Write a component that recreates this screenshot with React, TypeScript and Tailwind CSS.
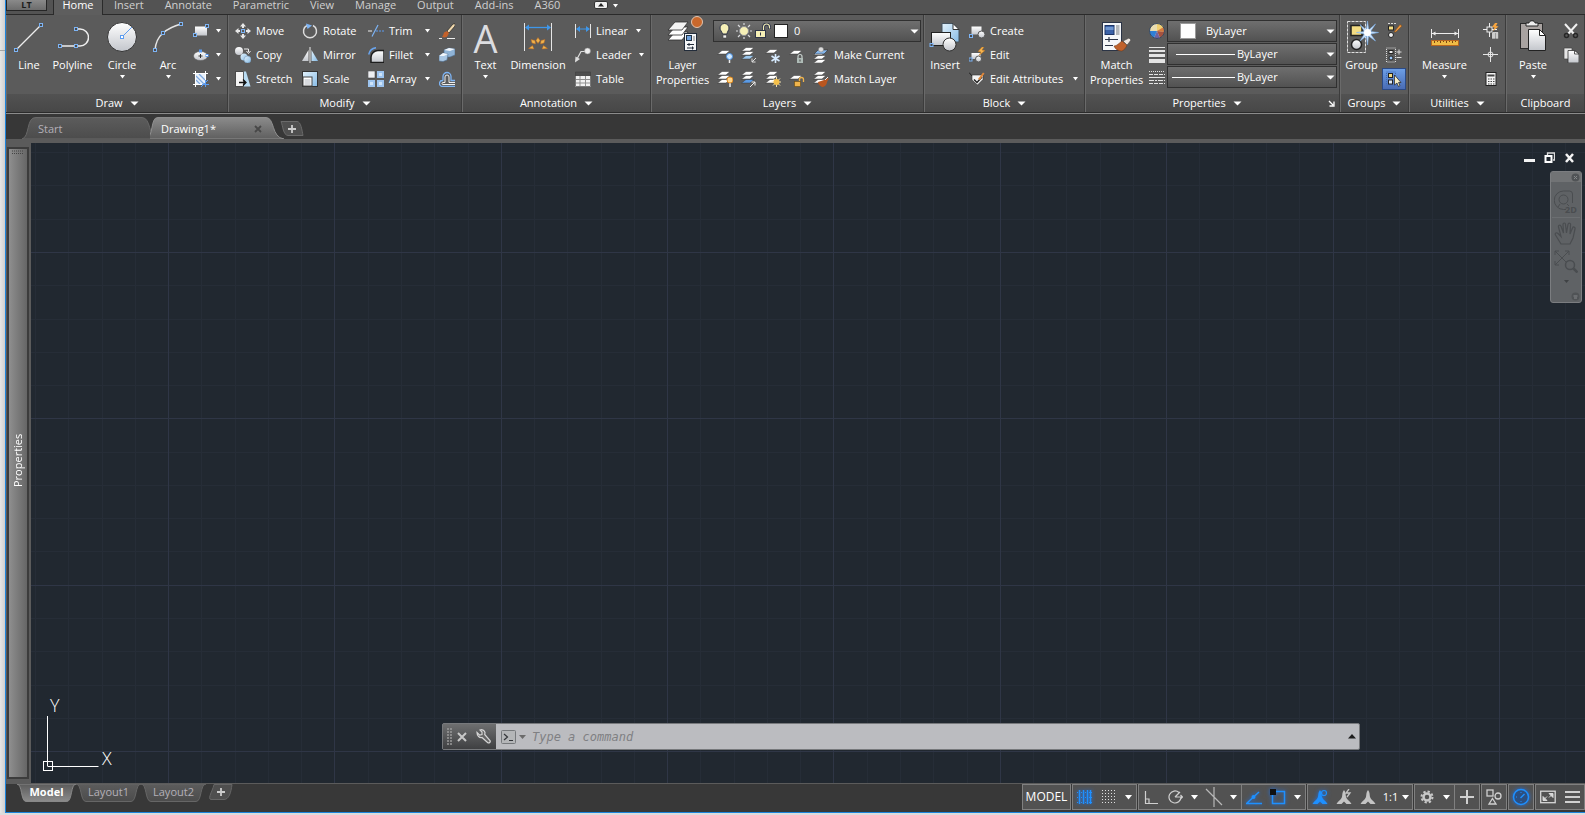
import type { ReactNode } from 'react'

const BLUE = '#7db4f5'
const SNAP = '#1e90ff'

function Svg({ w = 16, h = 16, children, className = '' }: { w?: number; h?: number; children: ReactNode; className?: string }) {
  return (
    <svg width={w} height={h} viewBox={`0 0 ${w} ${h}`} fill="none" aria-hidden="true" className={`shrink-0 ${className}`}>
      {children}
    </svg>
  )
}

function Caret() {
  return (
    <Svg w={7} h={4}>
      <path d="M1 0h5L3.500 3.500z" fill="#fff" />
    </Svg>
  )
}

function BigCaret() {
  return (
    <Svg w={9} h={5}>
      <path d="M0.500 0.500h8L4.500 4.500z" fill="#fff" />
    </Svg>
  )
}

function Grip({ x, y }: { x: number; y: number }) {
  return <rect x={x - 1.5} y={y - 1.5} width="3" height="3" fill="#4a4a4a" stroke={BLUE} />
}

function SharedDefs() {
  return (
    <svg className="absolute h-0 w-0" aria-hidden="true">
      <defs>
        <linearGradient id="silver" x1="0" y1="0" x2="0" y2="1">
          <stop offset="0" stopColor="#ffffff" />
          <stop offset="1" stopColor="#c3c6cc" />
        </linearGradient>
        <linearGradient id="sky" x1="0" y1="0" x2="1" y2="1">
          <stop offset="0" stopColor="#e4f2fb" />
          <stop offset="1" stopColor="#86bbe6" />
        </linearGradient>
        <linearGradient id="tab" x1="0" y1="0" x2="0" y2="1">
          <stop offset="0" stopColor="#5c5c5c" />
          <stop offset="1" stopColor="#4c4c4c" />
        </linearGradient>
        <linearGradient id="tabOn" x1="0" y1="0" x2="0" y2="1">
          <stop offset="0" stopColor="#8b8b8b" />
          <stop offset="1" stopColor="#5f5f5f" />
        </linearGradient>
        <linearGradient id="layoutOn" x1="0" y1="0" x2="0" y2="1">
          <stop offset="0" stopColor="#5b5b5b" />
          <stop offset="1" stopColor="#8c8c8c" />
        </linearGradient>
      </defs>
    </svg>
  )
}

/* stack of tilted sheets, shared by the layer icons */
function Sheets({ y = 0, n = 3, last = '#fff' }: { y?: number; n?: number; last?: string }) {
  return (
    <g transform={`translate(0 ${y})`}>
      {Array.from({ length: n }, (_, i) => n - 1 - i).map((i) => (
        <path key={i} d={`M5 ${0.5 + i * 4}h8l-4 3.500H0.500z`} fill={i === n - 1 ? last : '#fff'} stroke="#3a3a3a" strokeWidth=".5" />
      ))}
    </g>
  )
}

const icons = {
  line: (
    <Svg w={32} h={36}>
      <path d="M3 30 28 5" stroke="#eee" strokeWidth="1.3" />
      <Grip x={3} y={30} />
      <Grip x={28} y={5} />
    </Svg>
  ),
  polyline: (
    <Svg w={32} h={36}>
      <path d="M3 26h20a8.500 8.500 0 0 0 0-17h-4" stroke="#eee" strokeWidth="1.5" />
      <Grip x={3} y={26} />
      <Grip x={19} y={26} />
      <Grip x={19} y={9} />
    </Svg>
  ),
  circle: (
    <Svg w={32} h={36}>
      <circle cx="16" cy="17" r="14.5" fill="url(#silver)" stroke="#333" />
      <path d="M16 17 26 7" stroke="#5c9cf0" />
      <rect x="14.500" y="15.500" width="3" height="3" fill="#fff" stroke="#5c9cf0" />
    </Svg>
  ),
  arc: (
    <Svg w={32} h={36}>
      <path d="M3 30Q4 19 11 13T29 4" stroke="#e4e4e4" strokeWidth="1.5" />
      <Grip x={3} y={30} />
      <Grip x={11} y={13} />
      <Grip x={29} y={4} />
    </Svg>
  ),
  rect: (
    <Svg>
      <rect x="2" y="3.500" width="12" height="9" fill="url(#silver)" />
      <Grip x={2} y={12} />
      <Grip x={14} y={3} />
    </Svg>
  ),
  ellipse: (
    <Svg>
      <ellipse cx="7.500" cy="9" rx="7" ry="4.500" fill="url(#silver)" stroke="#555" strokeWidth=".5" />
      <path d="M7.500 7v4M5.500 9h4" stroke="#333" />
      <rect x="6.500" y="3" width="2" height="2" fill="#fff" stroke="#5c9cf0" />
      <rect x="13" y="7.500" width="2" height="2" fill="#fff" stroke="#5c9cf0" />
    </Svg>
  ),
  hatch: (
    <Svg>
      <rect x="3" y="3" width="9" height="10" fill="#e8f1fb" />
      <path d="m3 9 4 4M3 5l8 8M6 3l6 6" stroke="#7ea9e0" strokeWidth="1.200" />
      <path d="M0 2.500h15M2.500 0v16M0 13.500h13M12.500 0v10" stroke="#fff" />
      <path d="m8 16 7-7M9 13.500h7M12.500 9v7" stroke="#5c9cf0" />
    </Svg>
  ),
  move: (
    <Svg>
      <path d="m8 0 3 3.500H5zM8 16l3-3.500H5zM0 8l3.500-3v6zM16 8l-3.500-3v6z" fill="#e8e8e8" />
      <path d="M8 3v2M8 11v2M3 8h2M11 8h2" stroke="#e8e8e8" strokeWidth="2" />
      <rect x="6.500" y="6.500" width="3" height="3" stroke={BLUE} />
    </Svg>
  ),
  copy: (
    <Svg>
      <circle cx="4" cy="4" r="4" fill="url(#silver)" />
      <circle cx="9" cy="10" r="3.500" fill="url(#sky)" />
      <circle cx="12.500" cy="12.500" r="3.500" fill="url(#sky)" stroke="#6c93b8" strokeWidth=".5" />
      <path d="M9 2h4.500v3M11.500 4l2 2.500 2-2.500" stroke="#eee" />
    </Svg>
  ),
  stretch: (
    <Svg>
      <path d="M8 .5h3l4.500 15H8z" fill="#b9dcf3" />
      <path d="M.5.500h8v15h-8z" fill="#f4f4f4" stroke="#222" strokeWidth=".7" />
      <path d="M4 11.500h6M8 8.500l3 3-3 3" stroke="#111" strokeWidth="1.300" />
    </Svg>
  ),
  rotate: (
    <Svg>
      <path d="M11 2.500a6.500 6.500 0 1 1-6 0" stroke="#ddd" strokeWidth="1.500" />
      <path d="M4 .5 10 2.500 5.500 6z" fill={BLUE} />
    </Svg>
  ),
  mirror: (
    <Svg>
      <path d="M6.500 3v11H0z" fill="url(#silver)" />
      <path d="M9.500 3v11H16z" fill="url(#sky)" />
      <path d="M8 0v16" stroke="#eee" />
    </Svg>
  ),
  scale: (
    <Svg>
      <rect x=".5" y=".5" width="15" height="15" fill="url(#sky)" stroke="#333" />
      <rect x="1" y="6" width="9" height="9" fill="#fff" stroke="#444" />
      <rect x="2.500" y="8" width="6" height="6" fill="#d8dade" />
    </Svg>
  ),
  trim: (
    <Svg>
      <path d="M0 8h4" stroke="#eee" />
      <path d="M4 13.500 10 2" stroke={BLUE} strokeWidth="1.200" />
      <path d="M8 8h8" stroke="#5c9cf0" strokeDasharray="2 1" />
    </Svg>
  ),
  fillet: (
    <Svg>
      <path d="M3 15.500V10a7 7 0 0 1 7-6.500h6v12z" fill="url(#silver)" stroke="#1d1d1d" strokeWidth="1.500" />
      <path d="M.7 7.500A8.500 8.500 0 0 1 8 .7" stroke="#6aa5ee" strokeWidth="1.500" />
    </Svg>
  ),
  array: (
    <Svg>
      <path d="M0 0h7v7H0z" fill="#eef0f3" stroke="#333" strokeWidth=".5" />
      <path d="M9 0h7v7H9zM0 9h7v7H0zM9 9h7v7H9z" fill="#9dc4ef" />
      <path d="M11 2h3v3h-3zM2 11h3v3H2zM11 11h3v3h-3z" fill="#cfe4f9" />
    </Svg>
  ),
  erase: (
    <Svg>
      <path d="M8 8 14 1l2-.5V3L10 10z" fill="#f1d9ae" stroke="#222" strokeWidth=".7" />
      <path d="M5 9.500 8 8l2 2-1.500 3c-1.500 2-4 1.500-5.500.5 1 0 1.500-2.500 2-4z" fill="#c4612a" />
      <path d="M0 15.500h3M8 15.500h8" stroke="#eee" />
    </Svg>
  ),
  explode: (
    <Svg>
      <path d="m5 3 5-2 6 1v6l-5 2H5z" fill="#8fb3d6" stroke="#4f6f90" strokeWidth=".6" />
      <path d="m0 9 4-3 5 1-1 6-4 1.500L0 14z" fill="#a9c7e4" stroke="#4f6f90" strokeWidth=".6" />
      <path d="m5 3 5-2 6 1-5 2zM0 9l4-3 5 1-4 2z" fill="#f1f6fb" />
    </Svg>
  ),
  offset: (
    <Svg>
      <path d="M4 9.500V5.500a4 4 0 0 1 8 0v4h4M16 15.500H3.500a3 3 0 0 1 0-6H4" stroke={BLUE} strokeWidth="1.300" />
      <path d="M6 11.500V6a2 2 0 0 1 4 0v5.500h6M6 11.500H4a1 1 0 0 0 0 2h12" stroke="#eee" />
    </Svg>
  ),
  text: <span className="text-[38px] leading-9 text-[#dcdde0]">A</span>,
  dimension: (
    <Svg w={32} h={36}>
      <path d="M2.500 3v28M29.500 3v28" stroke="#e6e6e6" />
      <path d="M4 7.500h23" stroke="#3f97ea" strokeWidth="1.300" />
      <path d="m3 7.500 4-3v6zM29 7.500l-4-3v6z" fill="#3f97ea" />
      <g fill="#f0b44c" stroke="#b8651f" strokeWidth=".5">
        <path d="m16 17.500 2 3-2 3-2-3z" />
        <path d="m9 19.500 4 1 .5 3.500-3.500-1z" />
        <path d="m23 19.500-4 1-.5 3.500 3.500-1z" />
        <path d="m6.500 28.500 4-3 1.500 3.500z" />
        <path d="m25.500 28.500-4-3-1.500 3.500z" />
      </g>
    </Svg>
  ),
  linear: (
    <Svg>
      <path d="M.5 1v14M15.500 1v14" stroke="#e6e6e6" />
      <path d="M2 6h12" stroke="#3f97ea" />
      <path d="m1 6 4-3v6zM15 6l-4-3v6z" fill="#3f97ea" />
    </Svg>
  ),
  leader: (
    <Svg>
      <path d="M10 4.500H6L2 12" stroke="#ddd" strokeWidth="1.200" />
      <path d="m0 15.500.5-6L5 12z" fill="#ddd" />
      <circle cx="12.500" cy="4" r="3" fill="#eee" stroke="#888" strokeWidth=".5" />
    </Svg>
  ),
  table: (
    <Svg>
      <rect y="1" width="16" height="15" fill="#f1f1f1" />
      <rect y="1" width="16" height="4" fill="#4e4e4e" />
      <path d="M1 8.500h14M1 12h14M5 5v10M10.500 5v10" stroke="#8f8f8f" />
      <path d="M.5 1h15v14.500H.5z" stroke="#444" strokeWidth=".7" />
    </Svg>
  ),
  layerProps: (
    <Svg w={36} h={36} className="overflow-visible">
      <g stroke="#2f2f2f" strokeWidth=".8">
        <path d="M10 12h13l-6 8H3z" fill="#fff" />
        <path d="M10 7h13l-6 8H3z" fill="#fff" />
        <path d="M10 2h13l-6 8H3z" fill="#f3f3f3" />
      </g>
      <rect x="19.500" y="13.500" width="12" height="17" fill="#f4f6f8" stroke="#222c3a" />
      <rect x="21.500" y="15.500" width="5" height="5" fill="#6fa3e0" stroke="#234" />
      <path d="M28 16h2v5h-2z" fill="#bbb" />
      <path d="M22 24.500h7M22 28h7M24 23v3M27.500 26.500v3" stroke="#222c3a" />
      <circle cx="32" cy="2" r="5.500" fill="#c9682c" stroke="#e0c4b0" />
    </Svg>
  ),
  layOff: (
    <Svg>
      <Sheets n={1} y={3} />
      <path d="M12.500 11v5" stroke="#eee" strokeWidth="1.500" />
      <circle cx="12.500" cy="9.500" r="3" fill="#cfe8ff" stroke="#4a90e2" />
    </Svg>
  ),
  layIso: (
    <Svg>
      <Sheets last="#9cc8ee" />
      <path d="m15 11-4 4M11 11.500V15h3.500" stroke="#ddd" />
    </Svg>
  ),
  layFreeze: (
    <Svg>
      <Sheets n={1} y={2} />
      <path d="M10.500 7v9M6.500 9l8 5M14.500 9l-8 5" stroke="#d7ebff" strokeWidth="1.600" />
    </Svg>
  ),
  layLock: (
    <Svg>
      <Sheets n={1} y={3} />
      <rect x="8" y="11" width="6" height="5" fill="#aebbb6" />
      <path d="M9 11V9.500a2 2 0 0 1 4 0V11" stroke="#c9d3cf" strokeWidth="1.200" />
      <path d="M11 12.500v2" stroke="#444" />
    </Svg>
  ),
  makeCurrent: (
    <Svg>
      <Sheets y={4} />
      <path d="M5 3h10l-4 4H1z" fill="#86b6ea" stroke="#333" strokeWidth=".6" />
      <circle cx="8" cy="2.500" r="2.500" fill="#ddd" stroke="#777" strokeWidth=".5" />
    </Svg>
  ),
  layOn: (
    <Svg>
      <Sheets />
      <path d="M13 11v5" stroke="#eee" strokeWidth="1.500" />
      <circle cx="13" cy="9" r="3" fill="#ffd58a" stroke="#e08a20" />
    </Svg>
  ),
  layUniso: (
    <Svg>
      <Sheets last="#5b9be6" />
      <path d="m9 16 5-5M10.500 11H14v3.500" stroke="#eee" />
    </Svg>
  ),
  layThaw: (
    <Svg>
      <Sheets />
      <path d="M11.500 6v10M6.500 11h10M8 7.500l7 7M15 7.500l-7 7" stroke="#f3e3b0" />
      <circle cx="11.500" cy="11" r="3" fill="#f5c04a" />
    </Svg>
  ),
  layUnlock: (
    <Svg>
      <Sheets n={1} y={4} />
      <rect x="5.500" y="10.500" width="6" height="5" fill="#f0b44c" stroke="#6a4a10" strokeWidth=".6" />
      <path d="M10.500 10V8.500a2 2 0 0 1 4 0V11" stroke="#f0b44c" strokeWidth="1.300" />
    </Svg>
  ),
  matchLayer: (
    <Svg>
      <Sheets />
      <path d="m5 11 6-2 5-2-2 4c0 3-3 5-5 5-2-1-4-3-4-5z" fill="#b9561f" />
      <path d="m12 9 3-3" stroke="#eee" />
    </Svg>
  ),
  bulb: (
    <Svg>
      <path d="M7.500.500a4.500 4.500 0 0 1 4.500 4.500c0 2.500-1.800 3.500-2 6H5.500C5 8.500 3 7.500 3 5A4.500 4.500 0 0 1 7.500.500z" fill="#f5efb6" stroke="#2f3548" />
      <path d="M6 12h3.500v3H6z" fill="#f1f1f1" stroke="#444" strokeWidth=".6" />
    </Svg>
  ),
  sun: (
    <Svg>
      <path d="M8 0v2M8 14v2M0 8h2M14 8h2M2 2l2 2M14 2l-2 2M2 14l2-2M14 14l-2-2" stroke="#d9dadc" strokeWidth="1.200" />
      <circle cx="8" cy="8" r="4.500" fill="#f5efb6" stroke="#8d8f96" />
    </Svg>
  ),
  unlock: (
    <Svg>
      <path d="M8.500 8V4a3 3 0 0 1 6 0v2" stroke="#2f3548" strokeWidth="3" />
      <path d="M8.500 8V4a3 3 0 0 1 6 0v1.500" stroke="#f5efb6" strokeWidth="1.200" />
      <rect x=".5" y="7.500" width="10" height="7" fill="#f5efb6" stroke="#2f3548" />
      <path d="M5.500 9.500v3" stroke="#2f3548" />
    </Svg>
  ),
  insert: (
    <Svg w={32} h={36} className="overflow-visible">
      <path d="M13 3.500h11l6 6V22H13z" fill="url(#sky)" stroke="#45535f" />
      <path d="M24 3.500v6h6z" fill="#fff" stroke="#333" />
      <rect x="2.500" y="12.500" width="19" height="13" fill="url(#silver)" stroke="#222" />
      <circle cx="20.500" cy="24.500" r="6.500" fill="url(#silver)" stroke="#333" />
      <Grip x={2.5} y={25} />
    </Svg>
  ),
  create: (
    <Svg>
      <path d="M2.500 3.500h10v8h-10z" fill="url(#silver)" />
      <circle cx="12.500" cy="11.500" r="3.500" fill="url(#silver)" stroke="#555" />
      <Grip x={2} y={13} />
    </Svg>
  ),
  edit: (
    <Svg>
      <path d="M2.500 6h9v6h-9z" fill="url(#silver)" />
      <circle cx="9.500" cy="12" r="3" fill="url(#silver)" stroke="#555" />
      <path d="m13 0-4 4.500 3 .5-2 3.500 6-5-3-.5 2-3z" fill="#f7b550" stroke="#b8701c" strokeWidth=".5" />
      <Grip x={1.5} y={12.5} />
    </Svg>
  ),
  editAttr: (
    <Svg>
      <path d="M0 1.500 4 6" stroke="#1d1d1d" />
      <path d="M3 4h11v4.500L8.500 14 3 9z" fill="#f4f4f4" stroke="#333" strokeWidth=".6" />
      <path d="m5 8.500 3 3L13 6" stroke="#222" strokeWidth="1.500" />
      <path d="m9 8 5-6.500 1.500 1L11 9z" fill="#e2893a" />
    </Svg>
  ),
  matchProps: (
    <Svg w={32} h={36} className="overflow-visible">
      <rect x="1.500" y="2.500" width="19" height="28" fill="#f5f7f9" stroke="#2b3446" />
      <rect x="4" y="5.500" width="9" height="9" fill="#3b62a8" stroke="#1d3465" />
      <path d="M4.500 7h8v3h-8z" fill="#6f96cf" />
      <path d="M15 5h3.500v10H15z" fill="#b4b7bb" />
      <path d="M4 19.500h13M8 17v5M4 25.500h8" stroke="#2b3446" strokeWidth="1.200" />
      <path d="M13 26c3 0 5-3 8-5l5 4c-1 3-3 5-5 6-4 0-7-2-8-5z" fill="#c0622c" stroke="#6a3412" strokeWidth=".5" />
      <path d="m22 21 2-1 4-2 2 2-3 4-1 1z" fill="#efe7df" stroke="#444" strokeWidth=".6" />
    </Svg>
  ),
  colorWheel: (
    <Svg>
      <circle cx="8" cy="8" r="7.500" fill="#e9ddb0" />
      <path d="M8 8 8 .5A7.500 7.500 0 0 1 14.500 4z" fill="#f0cf70" />
      <path d="m8 8 6.500-4a7.500 7.500 0 0 1 1 5z" fill="#d77b3b" />
      <path d="m8 8 7.500 1A7.500 7.500 0 0 1 11 15z" fill="#a5523f" />
      <path d="m8 8 3 7a7.500 7.500 0 0 1-6 0z" fill="#6d63a5" />
      <path d="m8 8-3 7A7.500 7.500 0 0 1 .5 8z" fill="#2f7fd6" />
      <circle cx="8" cy="8" r="7.500" stroke="#3a4a60" />
    </Svg>
  ),
  lineweight: (
    <Svg>
      <path d="M0 .5h16" stroke="#e4e4e4" />
      <path d="M0 4h16" stroke="#e4e4e4" strokeWidth="2" />
      <path d="M0 8.500h16" stroke="#e4e4e4" strokeWidth="3" />
      <path d="M0 14h16" stroke="#e4e4e4" strokeWidth="4" />
    </Svg>
  ),
  linetype: (
    <Svg>
      <path d="M0 .500h16" stroke="#e4e4e4" strokeDasharray="1 1" />
      <path d="M0 3.500h16M0 12.500h16" stroke="#e4e4e4" strokeDasharray="4 1" />
      <path d="M0 6.500h16" stroke="#e4e4e4" />
      <path d="M0 9.500h16" stroke="#e4e4e4" strokeDasharray="5 1 2 1" />
    </Svg>
  ),
  group: (
    <Svg w={34} h={36} className="overflow-visible">
      <rect x="2.500" y="1.500" width="18" height="31" stroke="#e0e0e0" strokeDasharray="3 1" />
      <rect x="6" y="5.500" width="11" height="10" fill="#f3dc83" stroke="#222" strokeWidth="1.500" />
      <circle cx="11.500" cy="24.500" r="5" fill="url(#silver)" stroke="#222" strokeWidth="1.500" />
      <path d="m22.500 1 1.200 9 6.800-6-5 7.500 8 1-8 1.500 5 7-7-5-1 9-1.200-9-6.300 5 4.500-7-8-1.500 8-1-4.500-7 6.300 5.500z" fill="#cfe5fb" stroke="#7fb4ee" strokeWidth=".6" />
      <circle cx="22.500" cy="12.500" r="3.500" fill="#fff" />
    </Svg>
  ),
  groupEdit: (
    <Svg>
      <path d="M2 .500h8" stroke="#ddd" strokeDasharray="2 1" />
      <rect x="2.500" y="3" width="5" height="4" fill="#f3dc83" stroke="#222" />
      <circle cx="5" cy="12" r="2.500" fill="#eee" stroke="#222" />
      <path d="m8 9 6-7.500 2 1.500-6 6z" fill="#e9953f" stroke="#7a4713" strokeWidth=".5" />
    </Svg>
  ),
  ungroup: (
    <Svg>
      <rect x=".5" y="1" width="9" height="14" stroke="#ddd" strokeDasharray="1 1" />
      <rect x="3" y="3.500" width="4" height="3" fill="#eee" stroke="#222" />
      <circle cx="5" cy="11" r="2" fill="#9cc8f7" stroke="#222" />
      <path d="M10.500 5h5M13 2.500v5M10.500 10.500h5" stroke="#ddd" />
    </Svg>
  ),
  groupSelect: (
    <Svg>
      <rect x=".5" y="1" width="9" height="13" stroke="#3a6ab8" strokeDasharray="1 1" />
      <rect x="2.500" y="2.500" width="4" height="4" fill="#f3dc83" stroke="#222" />
      <rect x="2.500" y="9" width="4" height="4" fill="#dfe9f5" stroke="#222" />
      <path d="M8.500 4v10l2.500-2 1.500 3.500 1.500-1-1.500-3H15z" fill="#f7eec4" stroke="#222" strokeWidth=".7" />
    </Svg>
  ),
  measure: (
    <Svg w={32} h={36}>
      <path d="M2.500 9v9M29.500 9v9M3 13.500h26" stroke="#eee" />
      <path d="m3 13.500 3.500-2v4zM29 13.500l-3.500-2v4z" fill="#eee" />
      <rect x="2.500" y="20.500" width="27" height="5" fill="#f0bb45" stroke="#b8651f" />
      <path d="M5.500 21v2M8.500 21v1M11.500 21v2M14.500 21v1M17.500 21v2M20.500 21v1M23.500 21v2M26.500 21v1" stroke="#7a4713" />
    </Svg>
  ),
  quickSelect: (
    <Svg>
      <path d="M6.500 0v14M0 6.500h14" stroke="#eee" />
      <rect x="4" y="4" width="5" height="5" fill="#555" stroke="#eee" />
      <path d="m12 0-3 4 2.500.5L10 8l5.500-4.500L13 3l1.500-3z" fill="#f7a540" />
      <path d="M9 9h6.500v7H9z" fill="#fff" stroke="#333" strokeWidth=".5" />
      <path d="M10.500 11h4M10.500 13h4M10.500 15h4" stroke="#333" strokeDasharray="1 .5" />
    </Svg>
  ),
  idPoint: (
    <Svg>
      <path d="M7.500 0v15M0 7.500h15" stroke="#e6e6e6" />
      <circle cx="7.500" cy="7.500" r="2.500" stroke="#e6e6e6" />
    </Svg>
  ),
  calc: (
    <Svg>
      <rect x="3" y="1.500" width="10" height="13" fill="#f4f4f4" stroke="#222" />
      <rect x="4.500" y="3.500" width="7" height="2" fill="#444" />
      <path d="M5 8h7M5 10.500h7M5 13h7" stroke="#444" strokeDasharray="1.500 1" strokeWidth="1.200" />
    </Svg>
  ),
  paste: (
    <Svg w={32} h={36}>
      <rect x="3.500" y="3.500" width="22" height="25" fill="#a9a3a1" stroke="#2b2b2b" />
      <path d="M9 6V3h3c0-3 6-3 6 0h3v3z" fill="#eee" stroke="#222" />
      <path d="M11.500 9.500h11l6 6v15h-17z" fill="url(#silver)" stroke="#222" />
      <path d="M22.500 9.500v6h6z" fill="#fff" stroke="#222" />
    </Svg>
  ),
  cut: (
    <Svg>
      <path d="m2 1 9 10M14 1 5 11" stroke="#f1f1f1" strokeWidth="2" />
      <circle cx="3.500" cy="12.500" r="2" stroke="#262626" strokeWidth="1.500" />
      <circle cx="12.500" cy="12.500" r="2" stroke="#262626" strokeWidth="1.500" />
    </Svg>
  ),
  clip: (
    <Svg>
      <path d="M1 1h8v11H1z" fill="#e6e6e6" stroke="#444" strokeWidth=".7" />
      <path d="M5 3.500h6.500L16 7v9H5z" fill="url(#silver)" stroke="#333" strokeWidth=".8" />
      <path d="M11.500 3.500V7H16z" fill="#fff" stroke="#333" strokeWidth=".8" />
    </Svg>
  ),
}

type IconName = keyof typeof icons

function Tool({ icon, label, caret }: { icon: IconName; label: string; caret?: 'end' | 'near' }) {
  return (
    <button className="flex h-6 items-center gap-[5px] whitespace-nowrap">
      {icons[icon]}
      <span>{label}</span>
      {caret === 'end' && <span className="ml-auto"><Caret /></span>}
      {caret === 'near' && <span className="ml-[2px]"><Caret /></span>}
    </button>
  )
}

function IconTool({ icon, label, className = 'w-6' }: { icon: IconName; label: string; className?: string }) {
  return (
    <button aria-label={label} className={`flex h-6 shrink-0 items-center justify-center ${className}`}>
      {icons[icon]}
    </button>
  )
}

function BigTool({ icon, lines, width, caret }: { icon: IconName; lines: string[]; width: string; caret?: boolean }) {
  return (
    <button className={`flex shrink-0 flex-col items-center self-start leading-[15px] ${width}`}>
      <span className="flex h-[38px] items-start justify-center pt-px">{icons[icon]}</span>
      {lines.map((l) => (
        <span key={l} className="whitespace-nowrap">{l}</span>
      ))}
      {caret && <span className="mt-[3px]"><Caret /></span>}
    </button>
  )
}

function Panel({ title, width, children, caret = true, launcher }: { title: string; width: string; children: ReactNode; caret?: boolean; launcher?: boolean }) {
  return (
    <section aria-label={title} className={`flex flex-col border-r border-[#3c3c3c] ${width}`}>
      <div className="flex h-[79px] border-l border-[#6a6a6a] pt-1">{children}</div>
      <div className="flex h-[18px] items-center border-l border-[#6a6a6a] bg-linear-to-b from-[#525252] to-[#474747]">
        <button className="flex flex-1 items-center justify-center gap-[7px]">
          {title}
          {caret && <BigCaret />}
        </button>
        {launcher && (
          <button aria-label="Open properties palette" className="pr-1">
            <Svg w={7} h={7}>
              <path d="m1 1 4 4M6 1.500V6H1.500" stroke="#fff" strokeWidth="1.300" />
            </Svg>
          </button>
        )}
      </div>
    </section>
  )
}

function Combo({ label, value, children }: { label: string; value: string; children: ReactNode }) {
  return (
    <div className="flex h-[22px] items-center border border-[#303030] bg-linear-to-b from-[#6f6f6f] to-[#525252] pr-px">
      {children}
      <select aria-label={label} className="h-full min-w-0 flex-1 appearance-none bg-transparent outline-none">
        <option>{value}</option>
      </select>
      <BigCaret />
    </div>
  )
}

const menuTabs = ['Insert', 'Annotate', 'Parametric', 'View', 'Manage', 'Output', 'Add-ins', 'A360']

function MenuTabs() {
  return (
    <nav className="flex h-[15px] border-b border-[#2a2a2a] bg-[#535353] leading-[10px] text-[#d0d0d0]">
      <button className="mr-1.5 h-[11px] w-[41px] border border-t-0 border-[#262626] bg-linear-to-b from-[#8a8a8a] to-[#6c6c6c] text-[9px] font-bold text-[#1c1c1c]">
        LT
      </button>
      <button className="flex h-[15px] w-[50px] justify-center border-x border-[#2a2a2a] bg-[#5e5e5e] text-white">Home</button>
      <div className="flex gap-px pl-px">
        {menuTabs.map((t) => (
          <button key={t} className="flex px-[10px]">{t}</button>
        ))}
      </div>
      <button aria-label="Minimize ribbon" className="ml-6 flex gap-1 pt-px">
        <Svg w={14} h={8}>
          <rect x=".5" y=".5" width="13" height="7" rx="1.500" fill="#f0f0f0" stroke="#333" />
          <path d="M4 5.500h6L7 2z" fill="#222" />
        </Svg>
        <span className="pt-[3px]"><Caret /></span>
      </button>
    </nav>
  )
}

function Ribbon() {
  return (
    <div className="flex h-[99px] overflow-hidden border-b border-[#8b8b8b] bg-[#5b5b5b] text-white">
      <div className="flex h-[98px] min-w-0 flex-1 border-b border-[#2a2a2a]">
        <Panel title="Draw" width="w-[222px] shrink-0">
          <BigTool icon="line" lines={['Line']} width="w-[44px]" />
          <BigTool icon="polyline" lines={['Polyline']} width="w-[43px]" />
          <BigTool icon="circle" lines={['Circle']} width="w-[56px]" caret />
          <BigTool icon="arc" lines={['Arc']} width="w-[36px]" caret />
          <div className="pl-[7px]">
            {(['rect', 'ellipse', 'hatch'] as IconName[]).map((i) => (
              <button key={i} aria-label={i} className="flex h-6 items-center gap-1.5">
                {icons[i]}
                <Caret />
              </button>
            ))}
          </div>
        </Panel>

        <Panel title="Modify" width="w-[234px] shrink-0">
          <div className="flex w-[67px] flex-col pl-1.5">
            <Tool icon="move" label="Move" />
            <Tool icon="copy" label="Copy" />
            <Tool icon="stretch" label="Stretch" />
          </div>
          <div className="flex w-[66px] flex-col pl-1.5">
            <Tool icon="rotate" label="Rotate" />
            <Tool icon="mirror" label="Mirror" />
            <Tool icon="scale" label="Scale" />
          </div>
          <div className="flex w-[69px] flex-col pl-1.5">
            <Tool icon="trim" label="Trim" caret="end" />
            <Tool icon="fillet" label="Fillet" caret="end" />
            <Tool icon="array" label="Array" caret="end" />
          </div>
          <div className="flex flex-col pl-1">
            <IconTool icon="erase" label="Erase" />
            <IconTool icon="explode" label="Explode" />
            <IconTool icon="offset" label="Offset" />
          </div>
        </Panel>

        <Panel title="Annotation" width="w-[189px] shrink-0">
          <BigTool icon="text" lines={['Text']} width="w-[45px]" caret />
          <BigTool icon="dimension" lines={['Dimension']} width="w-[60px]" />
          <div className="flex flex-col pl-[7px]">
            <Tool icon="linear" label="Linear" caret="near" />
            <Tool icon="leader" label="Leader" caret="near" />
            <Tool icon="table" label="Table" />
          </div>
        </Panel>

        <Panel title="Layers" width="w-[273px] shrink-0">
          <BigTool icon="layerProps" lines={['Layer', 'Properties']} width="w-[61px]" />
          <div className="flex flex-1 flex-col pt-px pr-[2px]">
            <Combo label="Current layer" value="0">
              <span className="flex items-center gap-[3px] px-[3px]">
                {icons.bulb}
                {icons.sun}
                {icons.unlock}
                <span className="mr-[3px] h-3.5 w-3.5 border border-[#222] bg-white" />
              </span>
            </Combo>
            <div className="mt-px flex">
              <IconTool icon="layOff" label="Turn layer off" />
              <IconTool icon="layIso" label="Isolate layer" />
              <IconTool icon="layFreeze" label="Freeze layer" />
              <IconTool icon="layLock" label="Lock layer" />
              <span className="pl-1"><Tool icon="makeCurrent" label="Make Current" /></span>
            </div>
            <div className="flex">
              <IconTool icon="layOn" label="Turn all layers on" />
              <IconTool icon="layUniso" label="Unisolate layer" />
              <IconTool icon="layThaw" label="Thaw all layers" />
              <IconTool icon="layUnlock" label="Unlock layer" />
              <span className="pl-1"><Tool icon="matchLayer" label="Match Layer" /></span>
            </div>
          </div>
        </Panel>

        <Panel title="Block" width="w-[161px] shrink-0">
          <BigTool icon="insert" lines={['Insert']} width="w-[40px]" />
          <div className="flex flex-1 flex-col pr-[5px] pl-1">
            <Tool icon="create" label="Create" />
            <Tool icon="edit" label="Edit" />
            <Tool icon="editAttr" label="Edit Attributes" caret="end" />
          </div>
        </Panel>

        <Panel title="Properties" width="w-[255px] shrink-0" launcher>
          <BigTool icon="matchProps" lines={['Match', 'Properties']} width="w-[61px]" />
          <div className="flex flex-col">
            <IconTool icon="colorWheel" label="Object color" className="w-5" />
            <IconTool icon="lineweight" label="Lineweight" className="w-5" />
            <IconTool icon="linetype" label="Linetype" className="w-5" />
          </div>
          <div className="flex flex-1 flex-col gap-px pt-px pr-[2px]">
            <Combo label="Object color" value="ByLayer">
              <span className="mr-[10px] ml-3 h-4 w-4 border border-[#9a9a9a] bg-white" />
            </Combo>
            <Combo label="Lineweight" value="ByLayer">
              <span className="mr-[2px] ml-2 h-px w-[59px] bg-white" />
            </Combo>
            <Combo label="Linetype" value="ByLayer">
              <span className="mr-[2px] ml-1 h-px w-[63px] bg-white" />
            </Combo>
          </div>
        </Panel>

        <Panel title="Groups" width="w-[69px] shrink-0">
          <BigTool icon="group" lines={['Group']} width="w-[41px]" />
          <div className="flex flex-col">
            <IconTool icon="groupEdit" label="Group edit" />
            <IconTool icon="ungroup" label="Ungroup" />
            <button aria-label="Group selection on" aria-pressed="true" className="mt-px flex h-[22px] w-6 items-center justify-center border border-[#2b4a86] bg-linear-to-b from-[#6d9fe6] to-[#4a6cb4]">
              {icons.groupSelect}
            </button>
          </div>
        </Panel>

        <Panel title="Utilities" width="w-[97px] shrink-0">
          <BigTool icon="measure" lines={['Measure']} width="w-[69px]" caret />
          <div className="flex flex-col">
            <IconTool icon="quickSelect" label="Quick select" />
            <IconTool icon="idPoint" label="ID point" />
            <IconTool icon="calc" label="Quick calculator" />
          </div>
        </Panel>

        <Panel title="Clipboard" width="min-w-0 flex-1" caret={false}>
          <BigTool icon="paste" lines={['Paste']} width="w-[52px]" caret />
          <div className="flex flex-col">
            <IconTool icon="cut" label="Cut" />
            <IconTool icon="clip" label="Copy clip" />
          </div>
        </Panel>
      </div>
    </div>
  )
}

function FileTabs() {
  return (
    <div className="flex h-[29px] items-start border-b-4 border-[#5b5b5b] bg-[#373737] pt-[3px] pl-4">
      <button className="relative flex h-[22px] w-[128px] items-center pt-[2px] pl-4 text-[#b4b0b8]">
        <Svg w={134} h={22} className="absolute top-0 left-0">
          <path d="M0 22C8 20 4 0 14 .500H120c9 0 7 20 14 21.500z" fill="url(#tab)" stroke="#686868" />
        </Svg>
        <span className="relative">Start</span>
      </button>
      <div className="relative flex h-[22px] w-[130px] items-center justify-between pt-[2px] pr-[18px] pl-[11px] text-white">
        <Svg w={136} h={22} className="absolute top-0 left-0">
          <path d="M-4 22C4 20 0 0 8 .500H116c9 0 5 20 18 21.500z" fill="url(#tabOn)" stroke="#8f8f8f" />
        </Svg>
        <button className="relative">Drawing1*</button>
        <button aria-label="Close Drawing1" className="relative">
          <Svg w={8} h={8}>
            <path d="m1 1 6 6M7 1 1 7" stroke="#484848" strokeWidth="1.800" />
          </Svg>
        </button>
      </div>
      <button aria-label="New drawing" className="mt-1">
        <Svg w={24} h={16}>
          <path d="M1 .500h16c4 0 5 9 6 14H8C3 14 3 5 1 .500z" fill="#4f4f4f" stroke="#6a6a6a" />
          <path d="M12 4v8M8 8h8" stroke="#ccc" strokeWidth="1.800" />
        </Svg>
      </button>
    </div>
  )
}

function PalettePanel() {
  return (
    <aside className="w-[25px] shrink-0 bg-[#5b5b5b] px-px pt-1 pb-1">
      <div className="flex h-full w-[22px] flex-col items-center border-2 border-[#3c3c3c] bg-linear-to-r from-[#8f8f8f] to-[#666]">
        <Svg w={12} h={6} className="mt-px">
          <path d="M0 1h12M0 3.500h12" stroke="#444" strokeDasharray="1 1" />
        </Svg>
        <button className="mb-3 flex flex-1 rotate-180 items-center justify-center leading-[18px] text-white [writing-mode:vertical-rl]">Properties</button>
      </div>
    </aside>
  )
}

/* grid geometry in canvas units */
const STEP = 33.27
const MAJOR = 5
const steps = Array.from({ length: 120 }, (_, i) => i)

function DrawingGrid() {
  const isMajorX = (i: number) => i % MAJOR === 4
  const isMajorY = (i: number) => i % MAJOR === 3
  const lineX = (i: number) => <rect key={`x${i}`} x={Math.round(4 + i * STEP)} y="0" width="1" height="100%" fill={isMajorX(i) ? '#2f3646' : '#262d37'} />
  const lineY = (i: number) => <rect key={`y${i}`} x="0" y={Math.round(9.2 + i * STEP)} width="100%" height="1" fill={isMajorY(i) ? '#2f3646' : '#262d37'} />
  return (
    <svg className="absolute inset-0 h-full w-full" aria-hidden="true">
      {steps.filter((i) => !isMajorX(i)).map(lineX)}
      {steps.filter((i) => !isMajorY(i)).map(lineY)}
      {steps.filter(isMajorX).map(lineX)}
      {steps.filter(isMajorY).map(lineY)}
    </svg>
  )
}

function NavBar() {
  return (
    <div className="absolute top-7 right-[3px] flex w-8 flex-col items-center rounded-[3px] border border-[#7b7d80] bg-[#5f6265]">
      <div className="flex h-[10px] w-full items-center justify-end bg-[#717375] pr-px">
        <button aria-label="Close navigation bar">
          <Svg w={9} h={9}>
            <circle cx="4.500" cy="4.500" r="4" fill="#505356" />
            <path d="m3 3 3 3M6 3 3 6" stroke="#85888a" />
          </Svg>
        </button>
      </div>
      <button aria-label="2D wheel" className="flex h-[35px] items-start pt-2">
        <Svg w={24} h={24}>
          <path d="M18.500 13V4a3 3 0 0 0-3-3H9.500a9 9 0 1 0 0 18.500h2.500" stroke="#4a4d50" />
          <circle cx="9.500" cy="9.500" r="4.500" stroke="#4a4d50" />
          <path d="m6 14-2 3M13 14l2 2" stroke="#4a4d50" />
          <text x="11" y="23" fontSize="9" fontWeight="bold" fill="#4a4d50">2D</text>
        </Svg>
      </button>
      <button aria-label="Pan" className="flex h-[30px] w-7 items-start justify-center border-t border-[#6b6e71] pt-[3px]">
        <Svg w={24} h={25}>
          <path
            d="M7 23 1.500 14c-1-2 1-3 2.500-1.500l3 3L4.500 6c-.5-2 2-2.500 2.500-.700L9.500 12 9 3.500c0-2 2.500-2 2.500 0l1 8.500L14 3.500c.5-2 3-1.500 2.500.500L16 13l2.500-6c.700-1.800 3-1 2.500 1L19 17l-3 6z"
            stroke="#4a4d50"
            strokeWidth="1.200"
          />
        </Svg>
      </button>
      <button aria-label="Zoom extents" className="flex h-[29px] items-start pt-[2px]">
        <Svg w={24} h={24}>
          <path d="m1 2 14 14M15 2 1 16M1 6V2h4M11 2h4v4M1 12v4h4" stroke="#4a4d50" />
          <circle cx="16" cy="16" r="4.500" fill="#5f6265" stroke="#4a4d50" strokeWidth="1.500" />
          <path d="m19.500 19.500 4 4" stroke="#4a4d50" strokeWidth="2.500" />
        </Svg>
      </button>
      <button aria-label="Zoom options" className="flex h-[14px] items-start pt-1">
        <Svg w={5} h={3}>
          <path d="M0 0h5L2.500 3z" fill="#3f4244" />
        </Svg>
      </button>
      <button aria-label="Navigation bar options" className="flex h-3 w-full items-center justify-end pr-px">
        <Svg w={9} h={9}>
          <circle cx="4.500" cy="4.500" r="4" fill="#505356" />
          <path d="M2.500 4h4M3 6h3" stroke="#85888a" />
        </Svg>
      </button>
    </div>
  )
}

function CommandLine() {
  return (
    <div className="absolute right-[225px] bottom-[33px] left-[411px] flex h-[27px] rounded-[2px] border border-[#77797c] bg-[#bbbcc0]">
      <div className="flex w-[53px] items-center gap-[5px] bg-linear-to-b from-[#6e6f70] to-[#3f4042] pl-1">
        <Svg w={5} h={17}>
          <path d="M1 0v17M4 0v17" stroke="#9a9a9a" strokeWidth="1.500" strokeDasharray="2 1" />
        </Svg>
        <button aria-label="Close command line">
          <Svg w={10} h={10}>
            <path d="m1 1 8 8M9 1 1 9" stroke="#c8c8c8" strokeWidth="2" />
          </Svg>
        </button>
        <button aria-label="Customize" className="pl-1">
          <Svg w={15} h={15}>
            <path d="M1 3.500 3.500 6 6 5.500 6 3 4 1c2-.8 4.500.3 5 2.500l-.3 2L14 11.500c.8 1.500-.8 3-2.200 2.200L6 8.500C3.500 9 1 7 1 3.500z" fill="#666" stroke="#d6d6d6" strokeWidth="1.200" />
          </Svg>
        </button>
      </div>
      <button aria-label="Recent commands" className="flex items-center gap-[3px] pl-[5px]">
        <Svg w={15} h={14}>
          <rect x=".5" y=".5" width="14" height="13" rx="1" fill="#b4b6b8" stroke="#76797c" />
          <path d="m3 4 3.500 3L3 10M8 10.500h4" stroke="#33363a" strokeWidth="1.200" />
        </Svg>
        <Svg w={7} h={4}>
          <path d="M0 0h7L3.500 4z" fill="#6b6b6b" />
        </Svg>
      </button>
      <input
        aria-label="Command"
        placeholder="Type a command"
        className="min-w-0 flex-1 bg-transparent pl-1.5 font-['DejaVu_Sans_Mono',monospace] text-[12px] italic outline-none placeholder:text-[#7f8083]"
      />
      <button aria-label="Command history" className="pr-[3px]">
        <Svg w={8} h={5}>
          <path d="M0 4.500h8L4 0z" fill="#1d1d1d" />
        </Svg>
      </button>
    </div>
  )
}

function Canvas() {
  return (
    <main className="relative min-w-0 flex-1 overflow-hidden bg-[#212830]">
      <DrawingGrid />
      <div className="absolute top-[9px] right-[10px] flex items-center gap-[9px]">
        <button aria-label="Minimize">
          <Svg w={11} h={12}>
            <path d="M0 8.500h11" stroke="#f4f4f4" strokeWidth="3" />
          </Svg>
        </button>
        <button aria-label="Restore">
          <Svg w={11} h={12}>
            <path d="M3.500 3V1h7v7H9" stroke="#ddd" strokeWidth="1.300" />
            <rect x="1.500" y="4" width="6" height="6" stroke="#fff" strokeWidth="2" />
          </Svg>
        </button>
        <button aria-label="Close">
          <Svg w={11} h={12}>
            <path d="m2 2 7 8M9 2l-7 8" stroke="#f4f4f4" strokeWidth="2.500" />
          </Svg>
        </button>
      </div>
      <NavBar />
      {/* UCS icon */}
      <svg width="90" height="95" className="absolute bottom-0 left-2" fill="none" stroke="#fff" aria-hidden="true">
        <path d="M8.500 28v50M8.500 78.500h51" />
        <rect x="4.500" y="73.500" width="9" height="9" />
        <g fill="#fff" stroke="none" fontSize="18" fontWeight="300">
          <text x="11" y="24">Y</text>
          <text x="63" y="77">X</text>
        </g>
      </svg>
      <CommandLine />
    </main>
  )
}

function LayoutTab({ label, active, width }: { label: string; active?: boolean; width: string }) {
  return (
    <button className={`relative flex h-[18px] items-center justify-center pb-[2px] ${width} ${active ? 'font-bold text-white' : 'text-[#b4b0b8]'}`}>
      <svg viewBox="0 0 65 18" preserveAspectRatio="none" className="absolute inset-0 h-full w-full" aria-hidden="true">
        <path d="M0 0c6 0 4 17.500 10 17.500H55C61 17.500 59 0 65 0z" fill={active ? 'url(#layoutOn)' : 'url(#tab)'} stroke={active ? '#8a8a8a' : '#666'} />
      </svg>
      <span className="relative">{label}</span>
    </button>
  )
}

function DownArrow() {
  return (
    <Svg w={7} h={5}>
      <path d="M0 0h7L3.500 4.500z" fill="#fff" />
    </Svg>
  )
}

function StatusButton({ label, width, children }: { label: string; width: string; children: ReactNode }) {
  return (
    <button aria-label={label} className={`flex h-full items-center justify-center ${width}`}>
      {children}
    </button>
  )
}

const segment = 'flex h-[26px] items-center border border-[#808080] bg-[#525252]'
const PERSON = 'M8 1C6 3 6.500 6 6 8c-1 3-4 4-5.500 7h5L8 12.500 10.500 15h5c-1.500-3-4.500-4-5.500-7C9.500 6 10 3 8 1z'

function StatusBar() {
  return (
    <footer className="flex h-[29px] shrink-0 items-start border-t border-[#5b5b5b] bg-[#383838]">
      <div className="flex pl-[11px]">
        <LayoutTab label="Model" active width="w-[59px]" />
        <LayoutTab label="Layout1" width="w-[65px]" />
        <LayoutTab label="Layout2" width="w-[65px]" />
        <button aria-label="New layout" className="ml-[2px]">
          <Svg w={25} h={18}>
            <path d="M6 .500h18c-1 8-3 15-8 15H3C-1 15 5 6 6 .500z" fill="#4f4f4f" stroke="#666" />
            <path d="M13 4v8M9 8h8" stroke="#ccc" strokeWidth="1.800" />
          </Svg>
        </button>
      </div>

      <div className="ml-auto flex gap-px">
        <div className={segment}>
          <button className="h-full w-[47px] text-[12px] text-white">MODEL</button>
        </div>
        <div className={segment}>
          <StatusButton label="Grid display" width="w-6">
            <Svg className="drop-shadow-[0_0_2px_#1e6fe0]">
              <path d="M2.500 1v14M6.500 1v14M10.500 1v14M13.500 1v14" stroke={SNAP} strokeWidth="1.500" />
              <path d="M0 3.500h16M0 8.500h16M0 13.500h16" stroke={SNAP} strokeDasharray="1 1" />
            </Svg>
          </StatusButton>
          <StatusButton label="Snap mode" width="w-6">
            <Svg>
              <path d="M1 1.500h14M1 4.500h14M1 7.500h14M1 10.500h14M1 13.500h14" stroke="#e0e0e0" strokeDasharray="1 2" />
            </Svg>
          </StatusButton>
          <StatusButton label="Snap options" width="w-[15px]"><DownArrow /></StatusButton>
        </div>
        <div className={segment}>
          <StatusButton label="Ortho mode" width="w-6">
            <Svg>
              <path d="M2.500 2v12.500H15M2.500 10H6v4.500" stroke="#d0d0d0" strokeWidth="1.200" />
            </Svg>
          </StatusButton>
          <StatusButton label="Polar tracking" width="w-6">
            <Svg>
              <path d="M14 8a6 6 0 1 1-2-4.500M8 8h8M8 8l5-5M13.500 6l2 2-2 2" stroke="#d0d0d0" strokeWidth="1.200" />
            </Svg>
          </StatusButton>
          <StatusButton label="Polar options" width="w-[15px]"><DownArrow /></StatusButton>
          <StatusButton label="Isometric drafting" width="w-6">
            <Svg w={18} h={20}>
              <path d="M9 0v20M1 2l16 16" stroke="#b8b8b8" strokeWidth="1.200" />
            </Svg>
          </StatusButton>
          <StatusButton label="Isometric options" width="w-[15px]"><DownArrow /></StatusButton>
          <span className="h-full w-px bg-[#808080]" />
          <StatusButton label="Object snap tracking" width="w-6">
            <Svg className="drop-shadow-[0_0_2px_#1e6fe0]">
              <path d="M0 14.500h16M1 14 13 3" stroke={SNAP} strokeWidth="1.500" />
              <circle cx="7.500" cy="8" r="2" fill={SNAP} />
            </Svg>
          </StatusButton>
          <StatusButton label="Object snap" width="w-6">
            <Svg className="drop-shadow-[0_0_2px_#1e6fe0]">
              <rect x="2.500" y="2.500" width="12" height="12" stroke={SNAP} strokeWidth="1.500" />
              <rect width="6" height="6" fill="#111" />
            </Svg>
          </StatusButton>
          <StatusButton label="Object snap options" width="w-[15px]"><DownArrow /></StatusButton>
        </div>
        <div className={segment}>
          <StatusButton label="Annotation visibility" width="w-6">
            <Svg className="drop-shadow-[0_0_2px_#1e6fe0]">
              <path d={PERSON} fill={SNAP} />
              <circle cx="12" cy="4" r="2.500" stroke={SNAP} strokeWidth="1.200" />
            </Svg>
          </StatusButton>
          <StatusButton label="Auto scale" width="w-6">
            <Svg>
              <path d={PERSON} fill="#c4c4c4" />
              <path d="m13 0-3 4h4l-3 4" stroke="#c4c4c4" strokeWidth="1.300" />
            </Svg>
          </StatusButton>
          <StatusButton label="Annotation scale" width="w-6">
            <Svg>
              <path d={PERSON} fill="#c4c4c4" />
            </Svg>
          </StatusButton>
          <button className="flex h-full w-8 items-center justify-center gap-1 text-white">
            1:1
            <DownArrow />
          </button>
        </div>
        <div className={segment}>
          <StatusButton label="Workspace" width="w-6">
            <Svg>
              <circle cx="8" cy="8" r="3.500" stroke="#c8c8c8" strokeWidth="2.500" />
              <circle cx="8" cy="8" r="5.500" stroke="#c8c8c8" strokeWidth="2" strokeDasharray="2.300 2" />
            </Svg>
          </StatusButton>
          <StatusButton label="Workspace options" width="w-[15px]"><DownArrow /></StatusButton>
          <span className="h-full w-px bg-[#808080]" />
          <StatusButton label="Annotation monitor" width="w-6">
            <Svg>
              <path d="M8 1v14M1 8h14" stroke="#d0d0d0" strokeWidth="2" />
            </Svg>
          </StatusButton>
        </div>
        <div className={segment}>
          <StatusButton label="Isolate objects" width="w-6">
            <Svg>
              <rect x="1" y="1" width="6" height="6" stroke="#d0d0d0" strokeWidth="1.300" />
              <circle cx="12" cy="7" r="3" stroke="#d0d0d0" strokeWidth="1.300" />
              <path d="m6.500 9.500 3.500 5.500H3z" stroke="#d0d0d0" strokeWidth="1.300" />
            </Svg>
          </StatusButton>
        </div>
        <div className={segment}>
          <StatusButton label="Hardware acceleration" width="w-6">
            <Svg w={18} h={18} className="drop-shadow-[0_0_2px_#1e6fe0]">
              <circle cx="9" cy="9" r="7.500" fill="#2c4f80" stroke={SNAP} strokeWidth="1.500" />
              <path d="m8.500 10 4-4" stroke={SNAP} strokeWidth="1.500" />
              <path d="M4 9h1M9 4v1M9 13v1" stroke={SNAP} />
            </Svg>
          </StatusButton>
        </div>
        <div className={segment}>
          <StatusButton label="Clean screen" width="w-6">
            <Svg w={16} h={14}>
              <rect x=".7" y="1.200" width="14.500" height="11.500" stroke="#d8d8d8" strokeWidth="1.300" />
              <path d="M9 3.500h4v4zM3 6.500v4h4zM12 4.500l-3 3M4 9.500l3-3" fill="#d8d8d8" stroke="#d8d8d8" />
            </Svg>
          </StatusButton>
          <StatusButton label="Customization" width="w-6">
            <Svg>
              <path d="M1 3h15M1 8h15M1 13h15" stroke="#d0d0d0" strokeWidth="2" />
            </Svg>
          </StatusButton>
        </div>
      </div>
    </footer>
  )
}

export default function App() {
  return (
    <div className="flex h-screen overflow-hidden bg-[#dcdcdc] pb-[2px] font-['Open_Sans','Noto_Sans',sans-serif] text-[11px]">
      <SharedDefs />
      <div className="w-[5px] shrink-0 bg-linear-to-r from-[#e6e6e6] to-[#cfcfcf] pt-[50px]">
        <div className="h-px bg-[#a5a5a5]" />
      </div>
      <div className="flex min-w-0 flex-1 flex-col border-b border-l border-[#1c84dc] bg-[#383838]">
        <MenuTabs />
        <Ribbon />
        <FileTabs />
        <div className="flex min-h-0 flex-1">
          <PalettePanel />
          <Canvas />
        </div>
        <StatusBar />
      </div>
    </div>
  )
}
